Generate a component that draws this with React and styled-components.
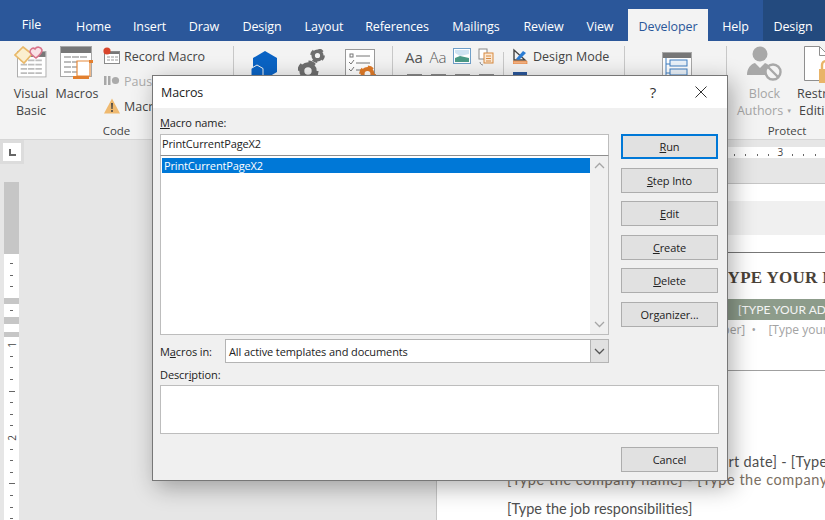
import React from "react";
import styled, { createGlobalStyle } from "styled-components";

const GlobalStyle = createGlobalStyle`
  html, body { margin: 0; padding: 0; background: #e6e6e6; }
  body { font-family: "Open Sans", "Noto Sans", sans-serif; }
`;

const Frame = styled.div`
  position: relative;
  width: 825px;
  height: 520px;
  overflow: hidden;
  display: flex;
  flex-direction: column;
  background: #e6e6e6;
`;

/* ---------- title tabs ---------- */
const TabBar = styled.div`
  height: 41px;
  flex: none;
  display: flex;
  align-items: flex-end;
  background: #2b579a;
  color: #fff;
  font-size: 12.5px;
  letter-spacing: -0.1px;
  white-space: nowrap;
`;

const Tab = styled.div`
  width: ${(p) => p.$w}px;
  height: ${(p) => (p.$active ? 32 : 41)}px;
  flex: none;
  display: flex;
  align-items: center;
  justify-content: center;
  padding-top: ${(p) => (p.$active ? 2 : 11)}px;
  padding-right: ${(p) => (p.$dark ? 2 : 0)}px;
  box-sizing: border-box;
  background: ${(p) => (p.$active ? "#f3f3f3" : p.$dark ? "#234a7e" : "transparent")};
  color: ${(p) => (p.$active ? "#2b579a" : "#fff")};
`;

const FileTab = styled(Tab)`
  padding-top: 8px;
`;

/* ---------- ribbon ---------- */
const Ribbon = styled.div`
  height: 98px;
  flex: none;
  display: flex;
  background: #f3f3f3;
  border-bottom: 1px solid #d6d6d6;
  overflow: hidden;
  color: #444;
  font-size: 12px;
`;

const Group = styled.div`
  position: relative;
  width: ${(p) => p.$w}px;
  flex: none;
  box-sizing: border-box;
  border-right: ${(p) => (p.$last ? "none" : "1px solid #c8c8c8")};
  margin: 5px 0 7px;
  padding: ${(p) => p.$pad || "0"};
  display: flex;
  gap: ${(p) => p.$gap || 0}px;
`;

const GroupLabel = styled.div`
  position: absolute;
  left: 0;
  right: 0;
  bottom: -6px;
  text-align: center;
  font-size: 11.5px;
  color: #444;
`;

const LargeButton = styled.div`
  width: ${(p) => p.$w || 46}px;
  flex: none;
  display: flex;
  flex-direction: column;
  align-items: center;
  text-align: center;
  line-height: 17px;
  font-size: 12.5px;
  white-space: nowrap;
  color: ${(p) => (p.$off ? "#a6a6a6" : "#444")};
`;

const LargeIcon = styled.div`
  height: 38px;
  margin-bottom: 1px;
`;

const LargeText = styled.div`
  flex: none;
`;

const Caret = styled.span`
  font-size: 6px;
  margin-left: 3px;
  vertical-align: 2px;
  color: #a6a6a6;
`;

const SmallColumn = styled.div`
  display: flex;
  flex-direction: column;
  gap: 7px;
  padding: 1px 0 0 3px;
`;

const SmallRow = styled.div`
  height: 18px;
  display: flex;
  align-items: center;
  gap: 3px;
  white-space: nowrap;
  font-size: 12.5px;
  color: ${(p) => (p.$off ? "#ababab" : "#444")};
`;

const StyleGrid = styled.div`
  display: grid;
  grid-template-columns: repeat(4, 18px);
  column-gap: 6px;
  row-gap: 8px;
  align-content: start;
  justify-items: center;
  padding: 2px 0 0;
`;

const StyleText = styled.span`
  font-size: 15px;
  line-height: 18px;
  color: #555;
  font-weight: ${(p) => (p.$light ? 300 : 400)};
`;

const MiniBox = styled.div`
  width: 15px;
  height: 14px;
  border: 1px solid #888;
  box-sizing: border-box;
  background: #fff;
`;

const ControlDivider = styled.div`
  width: 1px;
  height: 26px;
  background: #c8c8c8;
  margin: 6px 9px 0 8px;
`;

const DesignColumn = styled.div`
  display: flex;
  flex-direction: column;
  gap: 7px;
  padding-top: 1px;
`;

const DesignRow = styled(SmallRow)`
  gap: 4px;
`;

const BlueChip = styled.div`
  width: 14px;
  height: 10px;
  background: #2b579a;
`;

/* ---------- workspace ---------- */
const Workspace = styled.div`
  flex: 1;
  display: flex;
  min-height: 0;
`;

const LeftRail = styled.div`
  width: 26px;
  flex: none;
  display: flex;
  flex-direction: column;
  align-items: flex-start;
`;

const TabStop = styled.div`
  width: 24px;
  height: 24px;
  flex: none;
  background: #fff;
  border: 3px solid #dcdcdc;
  box-sizing: border-box;
  display: flex;
  align-items: center;
  justify-content: center;
`;

const TabStopGlyph = styled.div`
  width: 7px;
  height: 7px;
  border-left: 2px solid #666;
  border-bottom: 2px solid #666;
  box-sizing: border-box;
`;

const VRuler = styled.div`
  width: 15px;
  flex: none;
  margin: 18px 0 0 4px;
  display: flex;
  flex-direction: column;
`;

const RulerPart = styled.div`
  height: ${(p) => p.$h}px;
  flex: none;
  background: ${(p) => (p.$gray ? "#c6c6c6" : "#fff")};
  padding-top: ${(p) => p.$pad || 0}px;
  box-sizing: border-box;
`;

const RulerCell = styled.div`
  height: 11.6px;
  display: flex;
  align-items: center;
  justify-content: center;
  font-size: 10px;
  color: #444;
`;

const RotatedNum = styled.span`
  display: block;
  transform: rotate(-90deg);
  line-height: 1;
`;

const VTick = styled.div`
  width: ${(p) => (p.$long ? 6 : 3)}px;
  height: 1px;
  background: #666;
`;

const Main = styled.div`
  flex: 1;
  min-width: 0;
  margin-left: 410px;
  display: flex;
  flex-direction: column;
`;

const HRuler = styled.div`
  height: 11px;
  flex: none;
  margin-top: 7px;
  background: #fff;
  display: flex;
  justify-content: flex-end;
  align-items: center;
  padding-right: 4px;
`;

const HCell = styled.div`
  width: 11.6px;
  display: flex;
  justify-content: center;
  font-size: 10px;
  line-height: 11px;
  color: #444;
`;

const HTick = styled.div`
  width: 1px;
  height: 2px;
  margin-top: 4px;
  background: #666;
`;

const Page = styled.div`
  flex: 1;
  margin-top: 25px;
  background: #fff;
  border-left: 1px solid #c6c6c6;
  border-top: 1px solid #c6c6c6;
  overflow: hidden;
  display: flex;
  flex-direction: column;
`;

const PageBand = styled.div`
  height: 34px;
  flex: none;
  margin-top: 17px;
  background: #f0f0f0;
`;

const HeaderRule = styled.div`
  height: 1px;
  flex: none;
  margin-top: 17px;
  background: #777;
`;

const NameLine = styled.div`
  flex: none;
  margin-top: 14px;
  padding-left: 273px;
  font-family: "Liberation Serif", serif;
  font-size: 17px;
  line-height: 22px;
  font-weight: 700;
  letter-spacing: 0.3px;
  color: #4a4238;
  white-space: nowrap;
`;

const AddressBand = styled.div`
  height: 21px;
  flex: none;
  margin: 10px 0 0 200px;
  padding-left: 101px;
  background: #8d9c8b;
  color: #f4f4f4;
  font-family: "Lato", sans-serif;
  font-size: 12px;
  line-height: 21px;
  white-space: nowrap;
`;

const ContactLine = styled.div`
  flex: none;
  margin-top: 1px;
  padding-left: 158px;
  font-size: 12px;
  line-height: 17px;
  color: #a3a3a3;
  white-space: nowrap;
`;

const SectionRule = styled.div`
  height: 1px;
  flex: none;
  margin-top: 32px;
  background: #a0a0a0;
`;

const BodyLine = styled.div`
  flex: none;
  margin-top: ${(p) => p.$top || 0}px;
  padding-left: 70px;
  font-family: "Lato", sans-serif;
  font-size: 14.5px;
  line-height: 18px;
  letter-spacing: ${(p) => p.$spacing || 0}px;
  color: ${(p) => p.$color || "#4f4f4f"};
  white-space: nowrap;
`;

/* ---------- dialog ---------- */
const Dialog = styled.div`
  position: absolute;
  left: 152px;
  top: 75px;
  width: 576px;
  height: 406px;
  box-sizing: border-box;
  border: 1px solid #777;
  background: #f0f0f0;
  box-shadow: 4px 6px 22px rgba(0, 0, 0, 0.32);
  color: #222;
  font-size: 11px;
  letter-spacing: -0.1px;
  display: flex;
  flex-direction: column;
`;

const TitleBar = styled.div`
  height: 32px;
  flex: none;
  display: flex;
  align-items: center;
  padding-left: 8px;
  background: #fff;
  font-size: 12.5px;
`;

const TitleText = styled.div`
  flex: 1;
`;

const HelpGlyph = styled.div`
  width: 14px;
  text-align: center;
  margin-right: 35px;
  font-size: 15px;
  color: #333;
`;

const CloseGlyph = styled.svg`
  width: 12px;
  height: 12px;
  margin-right: 20px;
`;

const DialogBody = styled.div`
  flex: 1;
  padding: 0 8px 0 7px;
  display: flex;
  flex-direction: column;
`;

const TopRow = styled.div`
  display: flex;
  gap: 12px;
`;

const LeftColumn = styled.div`
  width: 449px;
  flex: none;
  display: flex;
  flex-direction: column;
`;

const FieldLabel = styled.label`
  display: block;
  height: 26px;
  line-height: 30px;
  white-space: nowrap;
`;

const NameInput = styled.div`
  height: 22px;
  box-sizing: border-box;
  background: #fff;
  border: 1px solid #bdbdbd;
  border-bottom-color: #8e8e8e;
  line-height: 18px;
  padding-left: 1px;
  letter-spacing: -0.15px;
`;

const ListBox = styled.div`
  height: 179px;
  box-sizing: border-box;
  display: flex;
  background: #fff;
  border: 1px solid #bdbdbd;
  border-top: none;
`;

const ListItems = styled.div`
  flex: 1;
  padding: 2px 0 0 1px;
`;

const SelectedItem = styled.div`
  height: 15px;
  line-height: 15px;
  padding-left: 2px;
  background: #0078d7;
  color: #fff;
  letter-spacing: -0.15px;
`;

const ListScroll = styled.div`
  width: 18px;
  flex: none;
  background: #f0f0f0;
  display: flex;
  flex-direction: column;
  justify-content: space-between;
  align-items: center;
  padding: 6px 0;
`;

const MacrosRow = styled.div`
  margin-top: 4px;
  height: 24px;
  display: flex;
  align-items: center;
`;

const RowLabel = styled.label`
  width: 65px;
  flex: none;
`;

const SelectBox = styled.div`
  flex: 1;
  height: 24px;
  box-sizing: border-box;
  display: flex;
  align-items: center;
  background: #fff;
  border: 1px solid #b4b4b4;
  padding-left: 3px;
`;

const SelectValue = styled.div`
  flex: 1;
`;

const SelectArrow = styled.div`
  width: 17px;
  align-self: stretch;
  display: flex;
  align-items: center;
  justify-content: center;
  background: #e1e1e1;
  border-left: 1px solid #b4b4b4;
`;

const ButtonColumn = styled.div`
  padding-top: 26px;
  width: 97px;
  display: flex;
  flex-direction: column;
  gap: 8.6px;
`;

const DialogButton = styled.div`
  height: 25px;
  box-sizing: border-box;
  display: flex;
  align-items: center;
  justify-content: center;
  background: #e1e1e1;
  border: ${(p) => (p.$primary ? "2px solid #0078d7" : "1px solid #adadad")};
  color: #222;
`;

const DescriptionLabel = styled.label`
  height: 22px;
  line-height: 23px;
`;

const DescriptionBox = styled.div`
  width: 559px;
  height: 49px;
  box-sizing: border-box;
  background: #fff;
  border: 1px solid #bdbdbd;
`;

const Footer = styled.div`
  display: flex;
  justify-content: flex-end;
  padding: 13px 1px 0 0;
`;

const CancelButton = styled(DialogButton)`
  width: 97px;
`;

const Key = styled.span`
  text-decoration: underline;
  text-underline-offset: 1px;
`;

/* ---------- drawings ---------- */
const Gear = ({ cx, cy, r, color }) => (
  <g fill="none" stroke={color}>
    <circle cx={cx} cy={cy} r={r * 0.62} strokeWidth={r * 0.5} />
    <circle cx={cx} cy={cy} r={r * 0.9} strokeWidth={r * 0.32} strokeDasharray={`${r * 0.7} ${r * 0.72}`} />
  </g>
);

const Sheet = () => (
  <g>
    <rect x="0.5" y="0.5" width="31" height="30" fill="#fff" stroke="#a8a8a8" />
    <rect x="1" y="1" width="30" height="6" fill="#777" />
    {[11, 16, 21, 26].map((y) => (
      <path key={y} d={`M4 ${y}H28`} stroke="#bdbdbd" strokeWidth="2" strokeDasharray="7 1" />
    ))}
  </g>
);

const VisualBasicIcon = () => (
  <svg width="34" height="32" viewBox="0 0 34 32">
    <g transform="translate(3 5) scale(.92 .85)"><Sheet /></g>
    <path d="M9 1l9 7-8 9-9-8z" fill="#fbefcf" stroke="#e9b868" strokeWidth="1.6" />
    <path d="M21 3c2-3 6-2 7 1 0 4-4 6-6 8-3-2-5-3-6-6 0-3 3-5 5-3z" fill="#f9e3e6" stroke="#d9748b" strokeWidth="1.6" />
  </svg>
);

const MacrosIcon = () => (
  <svg width="34" height="34" viewBox="0 0 34 34">
    <Sheet />
    <path d="M17 15h13v15H17z" fill="#fff" stroke="#e58a3c" strokeWidth="1.2" />
    <path d="M13 30h16v3H13z" fill="#e27f2e" />
    <path d="M29 14h4v3h-4z" fill="#e27f2e" />
  </svg>
);

const RecordIcon = () => (
  <svg width="18" height="18" viewBox="0 0 18 18">
    <rect x="1.5" y="4.5" width="15" height="12" fill="#fff" stroke="#8a8a8a" />
    <path d="M2 5h14v2H2z" fill="#777" />
    <path d="M4 10h11M4 13h11" stroke="#9a9a9a" strokeDasharray="3 1" />
    <circle cx="4" cy="4" r="3.6" fill="#d9452b" />
  </svg>
);

const PauseIcon = () => (
  <svg width="18" height="14" viewBox="0 0 18 14">
    <path d="M1 2h2.5v9H1zM5 2h2.5v9H5z" fill="#a8a8a8" />
    <circle cx="12.5" cy="6.5" r="3.6" fill="#ababab" />
  </svg>
);

const WarnIcon = () => (
  <svg width="18" height="16" viewBox="0 0 18 16">
    <path d="M9 0.5L17 15.5H1z" fill="#efb96f" />
    <path d="M8.1 5h1.8l-.3 6H8.4zM8.2 12h1.6v2H8.2z" fill="#444" />
  </svg>
);

const HexIcon = () => (
  <svg width="30" height="34" viewBox="0 0 30 34">
    <path d="M14 2l12 7v14l-12 7-12-7V9z" fill="#0a63c4" />
    <path d="M6 16l6 3.5v7L6 30l-6-3.5v-7z" fill="#0a63c4" stroke="#f3f3f3" />
  </svg>
);

const GearsIcon = () => (
  <svg width="30" height="34" viewBox="0 0 30 34">
    <Gear cx="19.5" cy="6.5" r="7" color="#6e6e6e" />
    <Gear cx="10" cy="22" r="10" color="#6e6e6e" />
  </svg>
);

const ChecklistIcon = () => (
  <svg width="32" height="34" viewBox="0 0 32 34">
    <rect x="0.5" y="0.5" width="29" height="31" fill="#fff" stroke="#9a9a9a" />
    <rect x="5" y="5" width="3" height="3" fill="none" stroke="#777" />
    <path d="M11 7h14M11 14h14M11 21h7" stroke="#777" />
    <path d="M4 13l2 2 3-4M4 20l2 2 3-4" fill="none" stroke="#777" />
    <Gear cx="22.5" cy="25" r="8" color="#e07b28" />
  </svg>
);

const PictureIcon = () => (
  <svg width="18" height="16" viewBox="0 0 18 16">
    <rect x="0.5" y="0.5" width="17" height="15" fill="#fff" stroke="#6f9fc9" />
    <rect x="2" y="2" width="14" height="12" fill="#cfe3f2" />
    <path d="M2 5l5 3 9-2v5H2z" fill="#fff" />
    <path d="M2 10l5-2 9 2v4H2z" fill="#4a9a86" />
  </svg>
);

const PropsIcon = () => (
  <svg width="17" height="18" viewBox="0 0 17 18">
    <rect x="1" y="1" width="8" height="10" fill="#fff" stroke="#8a8a8a" />
    <rect x="6" y="5" width="9" height="10" fill="#fbe9d6" stroke="#d98a3f" />
    <path d="M8 8h5M8 10.5h5M8 13h5" stroke="#d98a3f" />
    <path d="M2 14c0 2 2 3 3 3" fill="none" stroke="#8a8a8a" />
  </svg>
);

const DesignModeIcon = () => (
  <svg width="16" height="16" viewBox="0 0 16 16">
    <path d="M1 2v10h11z" fill="none" stroke="#444" strokeWidth="1.4" />
    <path d="M3 11l7-8 3 2-7 7z" fill="#2b7cd3" />
    <path d="M0 13h14v3H0z" fill="#f4b183" stroke="#e07b28" strokeWidth=".6" />
  </svg>
);

const MappingIcon = () => (
  <svg width="30" height="34" viewBox="0 0 30 34">
    <rect x="0.5" y="0.5" width="29" height="30" fill="#fff" stroke="#a8a8a8" />
    <rect x="1" y="1" width="28" height="5" fill="#777" />
    <path d="M4 6v22M4 12h4M4 21h4" fill="none" stroke="#3f7fc2" />
    <rect x="8" y="8" width="17" height="6" fill="#eaf2fa" stroke="#3f7fc2" />
    <rect x="8" y="17" width="17" height="6" fill="#eaf2fa" stroke="#3f7fc2" />
  </svg>
);

const BlockIcon = () => (
  <svg width="36" height="36" viewBox="0 0 36 36">
    <circle cx="13" cy="8" r="7.5" fill="#a8a8a8" />
    <path d="M0 29c0-7 4-11 8-12l5 5 5-5c3 1 5 3 6 5-3 1-5 4-5 7z" fill="#a8a8a8" />
    <circle cx="26" cy="26" r="7.5" fill="#f3f3f3" stroke="#a8a8a8" strokeWidth="2.4" />
    <path d="M21 21l10 10" stroke="#a8a8a8" strokeWidth="2.4" />
  </svg>
);

const RestrictIcon = () => (
  <svg width="30" height="38" viewBox="0 0 30 38">
    <path d="M.5.5h15l9 9v25H.5z" fill="#fff" stroke="#8f8f8f" />
    <path d="M15.5.5v9h9" fill="none" stroke="#8f8f8f" />
    <path d="M15 23h14v14H15z" fill="#e9b468" />
    <path d="M18 23v-4a4 4 0 018 0v4" fill="none" stroke="#e9b468" strokeWidth="2.4" />
  </svg>
);

const Chevron = ({ up, color = "#a6a6a6" }) => (
  <svg width="11" height="7" viewBox="0 0 11 7">
    <path d={up ? "M1 6l4.5-4.5L10 6" : "M1 1l4.5 4.5L10 1"} fill="none" stroke={color} strokeWidth="1.3" />
  </svg>
);

const tabs = [
  ["Home", 61],
  ["Insert", 51],
  ["Draw", 58],
  ["Design", 58],
  ["Layout", 66],
  ["References", 80],
  ["Mailings", 78],
  ["Review", 57],
  ["View", 56],
];

const leftRuler = [
  { h: 72, gray: true },
  { h: 44, pad: 4, ticks: 3 },
  { h: 6, gray: true },
  { h: 13, pad: 1, ticks: 1 },
  { h: 7, gray: true },
  { h: 8 },
  { h: 5, gray: true },
];

const lowerTicks = ["1", "", "", "", "-", "", "", "", "2", "", "", "", "-", "", "", ""];

const App = () => {
  return (
    <Frame>
      <GlobalStyle />
      <TabBar>
        <FileTab $w={63}>File</FileTab>
        {tabs.map(([label, w]) => (
          <Tab key={label} $w={w}>{label}</Tab>
        ))}
        <Tab $w={80} $active>Developer</Tab>
        <Tab $w={55}>Help</Tab>
        <Tab $w={62} $dark>Design</Tab>
      </TabBar>

      <Ribbon>
        <Group $w={234} $pad="0 0 0 8px">
          <LargeButton>
            <LargeIcon><VisualBasicIcon /></LargeIcon>
            <LargeText>Visual<br />Basic</LargeText>
          </LargeButton>
          <LargeButton>
            <LargeIcon><MacrosIcon /></LargeIcon>
            <LargeText>Macros</LargeText>
          </LargeButton>
          <SmallColumn>
            <SmallRow><RecordIcon />Record Macro</SmallRow>
            <SmallRow $off><PauseIcon />Pause Recording</SmallRow>
            <SmallRow><WarnIcon />Macro Security</SmallRow>
          </SmallColumn>
          <GroupLabel>Code</GroupLabel>
        </Group>

        <Group $w={159} $pad="3px 0 0 17px" $gap={17}>
          <HexIcon />
          <GearsIcon />
          <ChecklistIcon />
        </Group>

        <Group $w={232} $pad="0 0 0 12px">
          <StyleGrid>
            <StyleText>Aa</StyleText>
            <StyleText $light>Aa</StyleText>
            <PictureIcon />
            <PropsIcon />
            <MiniBox />
            <MiniBox />
            <MiniBox />
            <MiniBox />
          </StyleGrid>
          <ControlDivider />
          <DesignColumn>
            <DesignRow><DesignModeIcon />Design Mode</DesignRow>
            <BlueChip />
          </DesignColumn>
        </Group>

        <Group $w={102} $pad="6px 0 0 37px">
          <MappingIcon />
        </Group>

        <Group $w={120} $pad="0 0 0 6px" $last>
          <LargeButton $w={63} $off>
            <LargeIcon><BlockIcon /></LargeIcon>
            <LargeText>Block<br />Authors<Caret>▼</Caret></LargeText>
          </LargeButton>
          <LargeButton>
            <LargeIcon><RestrictIcon /></LargeIcon>
            <LargeText>Restrict<br />Editing</LargeText>
          </LargeButton>
          <GroupLabel>Protect</GroupLabel>
        </Group>
      </Ribbon>

      <Workspace>
        <LeftRail>
          <TabStop><TabStopGlyph /></TabStop>
          <VRuler>
            {leftRuler.map((part, i) => (
              <RulerPart key={i} $h={part.h} $gray={part.gray} $pad={part.pad}>
                {Array.from({ length: part.ticks || 0 }, (_, t) => (
                  <RulerCell key={t}><VTick /></RulerCell>
                ))}
              </RulerPart>
            ))}
            <RulerPart $h={190} $pad={2}>
              {lowerTicks.map((mark, i) => (
                <RulerCell key={i}>
                  {mark === "" && <VTick />}
                  {mark === "-" && <VTick $long />}
                  {mark !== "" && mark !== "-" && <RotatedNum>{mark}</RotatedNum>}
                </RulerCell>
              ))}
            </RulerPart>
          </VRuler>
        </LeftRail>

        <Main>
          <HRuler>
            {["", "", "", "", "3", "", "", ""].map((mark, i) => (
              <HCell key={i}>{mark || <HTick />}</HCell>
            ))}
          </HRuler>
          <Page>
            <PageBand />
            <HeaderRule />
            <NameLine>[TYPE YOUR NAME]</NameLine>
            <AddressBand>[TYPE YOUR ADDRESS]</AddressBand>
            <ContactLine>[Type your phone number] &nbsp;•&nbsp;&nbsp;&nbsp; [Type your e-mail]</ContactLine>
            <SectionRule />
            <BodyLine $top={82} $spacing={0.3}>[Type the job title] - [Type the start date] - [Type the end date]</BodyLine>
            <BodyLine $color="#7b6f62" $spacing={0.55}>[Type the company name] - [Type the company address]</BodyLine>
            <BodyLine $top={11}>[Type the job responsibilities]</BodyLine>
          </Page>
        </Main>
      </Workspace>

      <Dialog>
        <TitleBar>
          <TitleText>Macros</TitleText>
          <HelpGlyph>?</HelpGlyph>
          <CloseGlyph viewBox="0 0 12 12">
            <path d="M.5.5l11 11M11.5.5l-11 11" stroke="#333" fill="none" />
          </CloseGlyph>
        </TitleBar>
        <DialogBody>
          <TopRow>
            <LeftColumn>
              <FieldLabel><Key>M</Key>acro name:</FieldLabel>
              <NameInput>PrintCurrentPageX2</NameInput>
              <ListBox>
                <ListItems>
                  <SelectedItem>PrintCurrentPageX2</SelectedItem>
                </ListItems>
                <ListScroll>
                  <Chevron up />
                  <Chevron />
                </ListScroll>
              </ListBox>
              <MacrosRow>
                <RowLabel>M<Key>a</Key>cros in:</RowLabel>
                <SelectBox>
                  <SelectValue>All active templates and documents</SelectValue>
                  <SelectArrow><Chevron color="#555" /></SelectArrow>
                </SelectBox>
              </MacrosRow>
            </LeftColumn>
            <ButtonColumn>
              <DialogButton $primary><Key>R</Key>un</DialogButton>
              <DialogButton><Key>S</Key>tep Into</DialogButton>
              <DialogButton><Key>E</Key>dit</DialogButton>
              <DialogButton><Key>C</Key>reate</DialogButton>
              <DialogButton><Key>D</Key>elete</DialogButton>
              <DialogButton>Or<Key>g</Key>anizer...</DialogButton>
            </ButtonColumn>
          </TopRow>
          <DescriptionLabel>Descr<Key>i</Key>ption:</DescriptionLabel>
          <DescriptionBox />
          <Footer>
            <CancelButton>Cancel</CancelButton>
          </Footer>
        </DialogBody>
      </Dialog>
    </Frame>
  );
};

export default App;
